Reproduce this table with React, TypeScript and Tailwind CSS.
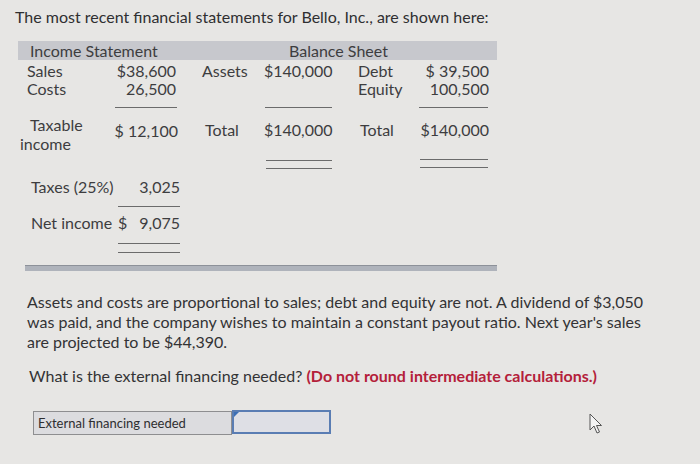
import React from "react";

const U = ({ w, ml }: { w: string; ml?: string }) => (
  <div className={`h-px bg-[#6b6b6b] ${w} ${ml ?? ""}`} />
);

export default function App() {
  return (
    <div
      className="w-[700px] h-[464px] overflow-hidden bg-[#e7e6e4] text-[#3d3d3f] relative"
      style={{ fontFamily: "Lato, 'Open Sans', sans-serif" }}
    >
      <div className="pl-[15px] pt-[7px] text-[16px] leading-[20px] text-[#2f2f31]">
        The most recent financial statements for Bello, Inc., are shown here:
      </div>

      {/* table */}
      <div className="ml-[18px] mt-[14px] w-[479px] text-[16px]">
        {/* header band */}
        <div className="flex h-[19px] items-center bg-[#c7c8cd] leading-[19px]">
          <div className="w-[271px] pl-[12px]">Income Statement</div>
          <div>Balance Sheet</div>
        </div>
        {/* Sales row */}
        <div className="flex h-[18px] leading-[18px] mt-[2px]">
          <div className="w-[96px] pl-[9px]">Sales</div>
          <div className="w-[62px] text-right">$38,600</div>
          <div className="w-[88px] pl-[26px]">Assets</div>
          <div className="w-[68px] text-right">$140,000</div>
          <div className="w-[87px] pl-[26px]">Debt</div>
          <div className="w-[70px] text-right">$ 39,500</div>
        </div>
        {/* Costs row */}
        <div className="flex h-[18px] leading-[18px]">
          <div className="w-[96px] pl-[9px]">Costs</div>
          <div className="w-[62px] text-right">26,500</div>
          <div className="w-[88px]" />
          <div className="w-[68px]" />
          <div className="w-[87px] pl-[26px]">Equity</div>
          <div className="w-[70px] text-right">100,500</div>
        </div>
        {/* underlines */}
        <div className="flex mt-[9px]">
          <U w="w-[62px]" ml="ml-[97px]" />
          <U w="w-[67px]" ml="ml-[88px]" />
          <U w="w-[69px]" ml="ml-[87px]" />
        </div>
        {/* Taxable income */}
        <div className="flex mt-[8px] leading-[18px]">
          <div className="w-[96px]">
            <div className="pl-[12px]">Taxable</div>
            <div className="pl-[2px] mt-[1px]">income</div>
          </div>
          <div className="w-[64px] pt-[6px] text-right">$ 12,100</div>
          <div className="w-[86px] pt-[5px] pl-[27px]">Total</div>
          <div className="w-[68px] pt-[5px] text-right">$140,000</div>
          <div className="w-[87px] pt-[5px] pl-[28px]">Total</div>
          <div className="w-[70px] pt-[5px] text-right">$140,000</div>
        </div>
        {/* double underlines */}
        <div className="flex mt-[7px]">
          <div className="ml-[248px] w-[66px] flex flex-col gap-[7px]">
            <U w="w-[66px]" />
            <U w="w-[66px]" />
          </div>
          <div className="ml-[88px] w-[68px] flex flex-col gap-[7px] -mt-[1px]">
            <U w="w-[68px]" />
            <U w="w-[68px]" />
          </div>
        </div>
        {/* Taxes */}
        <div className="flex mt-[9px] h-[18px] leading-[18px]">
          <div className="w-[102px] pl-[13px] whitespace-nowrap">Taxes (25%)</div>
          <div className="w-[60px] text-right">3,025</div>
        </div>
        <div className="flex mt-[10px]">
          <U w="w-[62px]" ml="ml-[100px]" />
        </div>
        {/* Net income */}
        <div className="flex mt-[7px] h-[18px] leading-[18px]">
          <div className="w-[100px] pl-[13px] whitespace-nowrap">Net income</div>
          <div className="w-[12px]">$</div>
          <div className="w-[50px] text-right">9,075</div>
        </div>
        <div className="ml-[100px] w-[62px] mt-[11px] flex flex-col gap-[8px]">
          <U w="w-[62px]" />
          <U w="w-[62px]" />
        </div>
      </div>

      {/* gray bar */}
      <div className="ml-[25px] mt-[12px] w-[472px] h-[6px] bg-[#afb3bb] border-t border-[#8d9199]" />

      {/* paragraph */}
      <div className="ml-[27px] mt-[21px] w-[660px] text-[16px] leading-[20px] text-[#333335] whitespace-nowrap">
        Assets and costs are proportional to sales; debt and equity are not. A dividend of $3,050
        <br />
        was paid, and the company wishes to maintain a constant payout ratio. Next year's sales
        <br />
        are projected to be $44,390.
      </div>
      <div className="ml-[29px] mt-[14px] text-[16px] leading-[20px] text-[#333335]">
        What is the external financing needed?{" "}
        <span className="font-bold text-[#b4203a]">(Do not round intermediate calculations.)</span>
      </div>

      {/* input row */}
      <div className="flex ml-[33px] mt-[25px] items-start">
        <div className="w-[199px] h-[24px] border border-[#8e8e90] bg-[#dcdcdf] pl-[4px] text-[13px] leading-[22px] text-[#2e2e30]">
          External financing needed
        </div>
        <div className="relative w-[99px] h-[24px] border-2 border-[#5a7db3] bg-[#dedfe5] -mt-[1px]">
          <div className="absolute left-0 top-0 w-0 h-0 border-t-[5px] border-t-[#3d6fb5] border-r-[5px] border-r-transparent" />
        </div>
      </div>

      {/* cursor */}
      <svg className="absolute left-[589px] top-[413px]" width="14" height="22" viewBox="0 0 14 22">
        <path d="M1 1 L1 17 L5 13 L8 20 L10.5 19 L7.5 12.5 L12.5 12.5 Z" fill="#f4f4f4" stroke="#555" strokeWidth="1" strokeLinejoin="round" />
      </svg>
    </div>
  );
}
